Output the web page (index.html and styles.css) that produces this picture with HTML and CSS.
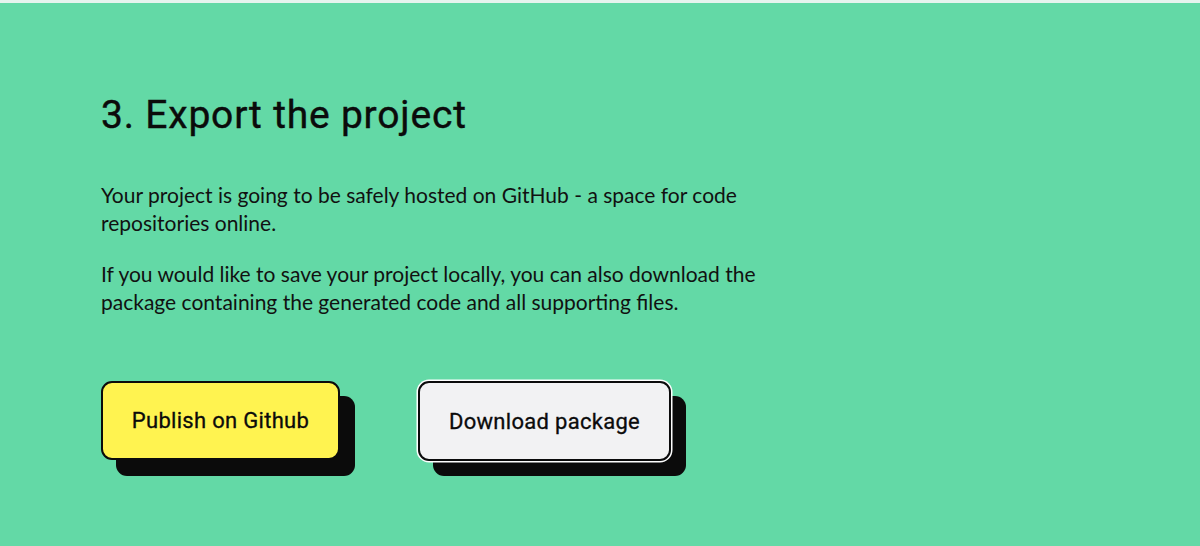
FILE: index.html
```html
<!DOCTYPE html>
<html>
<head>
<meta charset="utf-8">
<link rel="stylesheet" href="styles.css">
</head>
<body>
<div class="topline"></div>
<main class="section">
  <h1 class="title">3. Export the project</h1>
  <p class="text">Your project is going to be safely hosted on GitHub - a space for code repositories online.</p>
  <p class="text">If you would like to save your project locally, you can also download the package containing the generated code and all supporting files.</p>
  <div class="actions">
    <div class="btn-wrap"><button class="btn btn-yellow">Publish on Github</button></div>
    <div class="btn-wrap"><button class="btn btn-grey">Download package</button></div>
  </div>
</main>
</body>
</html>
```
FILE: styles.css
```css
html, body {
  margin: 0;
  padding: 0;
}
body {
  background: #63d9a6;
  width: 1200px;
  height: 546px;
  overflow: hidden;
}
.topline {
  height: 3px;
  background: #e6f4ee;
}
.section {
  padding: 90px 0 0 101px;
}
.title {
  margin: 0 0 44px 0;
  font-family: Roboto, sans-serif;
  font-weight: 400;
  font-size: 39px;
  line-height: 44px;
  color: #0b0b0b;
  letter-spacing: 0.8px;
  -webkit-text-stroke: 0.4px #0b0b0b;
}
.text {
  margin: 0 0 23px 0;
  width: 700px;
  font-family: Lato, sans-serif;
  font-size: 21px;
  line-height: 28px;
  color: #111;
}
.actions {
  display: flex;
  gap: 78px;
  margin-top: 65px;
}
.btn-wrap {
  position: relative;
}
.btn {
  position: relative;
  z-index: 1;
  font-family: Roboto, sans-serif;
  font-weight: 400;
  font-size: 22px;
  letter-spacing: 0.3px;
  -webkit-text-stroke: 0.3px #0b0b0b;
  color: #0b0b0b;
  border: 2px solid #0b0b0b;
  border-radius: 11px;
  height: 79px;
  padding: 0;
  cursor: pointer;
}
.btn-wrap::after {
  content: "";
  position: absolute;
  left: 15px;
  top: 15px;
  right: -15px;
  bottom: -15px;
  background: #0b0b0b;
  border-radius: 11px;
}
.btn-yellow {
  background: #fff350;
  width: 239px;
}
.btn-grey {
  background: #f2f2f3;
  width: 253px;
  height: 80px;
  box-shadow: 0 0 0 1.5px #ffffff;
}
```
